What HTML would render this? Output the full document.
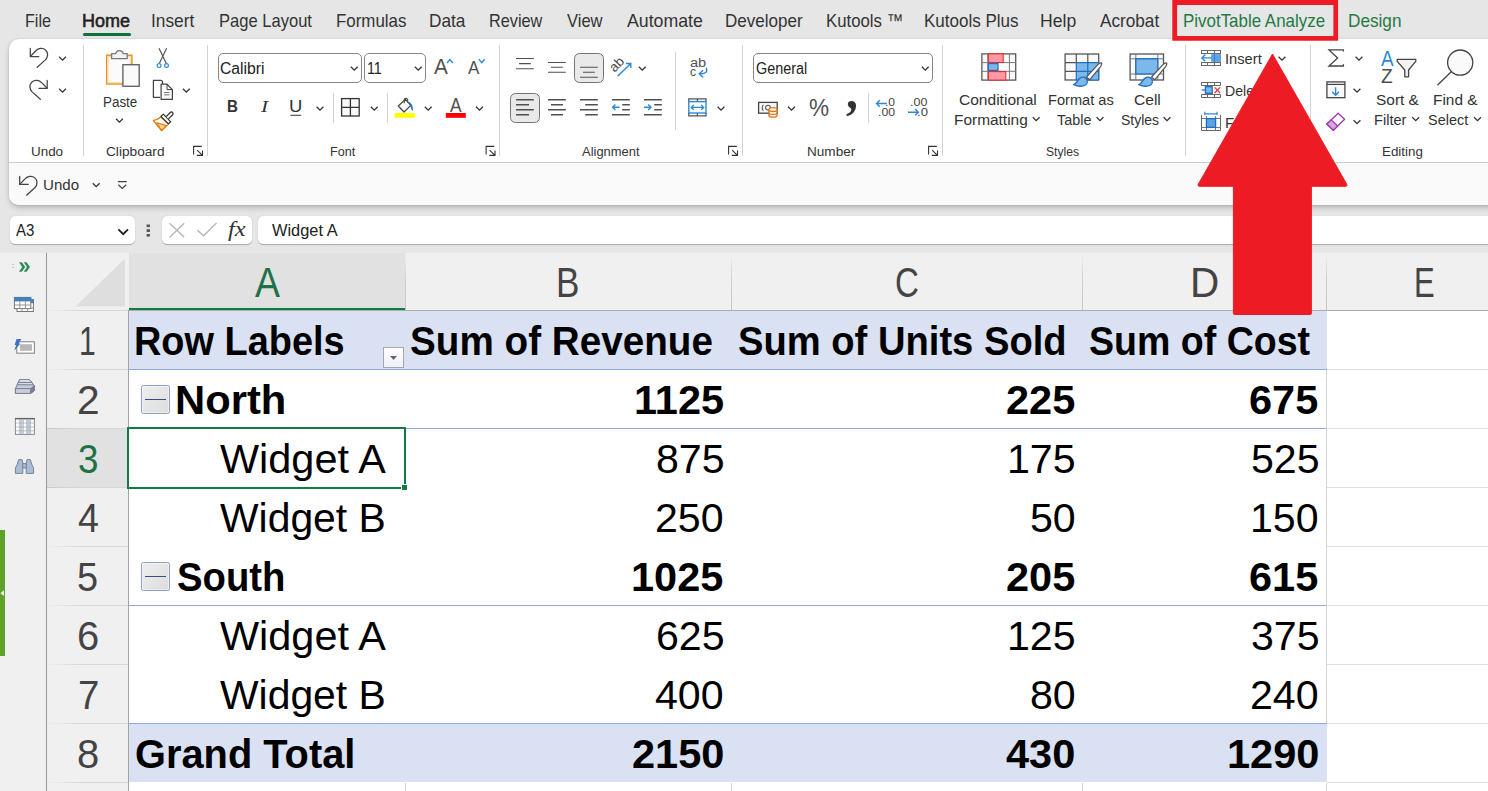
<!DOCTYPE html>
<html lang="en">
<head>
<meta charset="utf-8">
<title>Excel PivotTable Analyze</title>
<style>
html,body{margin:0;padding:0;}
body{width:1488px;height:791px;overflow:hidden;position:relative;background:#e6e6e6;font-family:"Liberation Sans",sans-serif;}
.a{position:absolute;}
.t{position:absolute;white-space:nowrap;transform-origin:0 0;font-family:"Liberation Sans",sans-serif;}
.sf{font-family:"Liberation Serif",serif;}
#ribbon{left:9px;top:39px;width:1500px;height:166px;background:#fff;border-radius:10px 0 0 10px;box-shadow:0 3px 6px -1px rgba(0,0,0,.26),0 0 2px rgba(0,0,0,.12);}
#qat{left:9px;top:162px;width:1500px;height:43px;background:#fafafa;border-top:1px solid #cdcdcd;border-radius:0 0 0 10px;box-sizing:border-box;}
.gs{width:1px;top:45px;height:111px;background:#d2d2d2;}
.ss{width:1px;top:93px;height:30px;background:#d2d2d2;}
.combo{top:53px;height:30px;background:#fff;border:1px solid #868686;border-radius:5px;box-sizing:border-box;}
.sel{background:#e9e9e9;border:1px solid #747474;border-radius:5.5px;box-sizing:border-box;width:30px;height:30px;}
.fb{top:215.75px;height:28.5px;background:#fff;border-radius:5px;box-shadow:0 0.5px 1px rgba(0,0,0,.28);}
#side{left:0;top:253px;width:46px;height:538px;background:#f0f0f0;}
#sideln{left:46px;top:253px;width:1px;height:538px;background:#989898;}
#colhdr{left:47px;top:253px;width:1441px;height:57px;background:#f0f0f0;border-bottom:1px solid #ababab;box-sizing:content-box;}
#rowhdr{left:47px;top:310px;width:81px;height:481px;background:#f0f0f0;border-right:1px solid #a3a3a3;}
#sheet{left:129px;top:311px;width:1359px;height:480px;background:#fff;}
.fill{background:#d9e1f2;left:129px;width:1198px;}
.bl{left:129px;width:1198px;height:1px;background:#8ea9db;}
.hl{left:1327px;width:161px;height:1px;background:#e1e1e1;}
.vl{width:1px;background:#d4d4d4;}
.rs{left:47px;width:81px;height:1px;background:linear-gradient(to right,rgba(215,215,215,0),#d7d7d7 40%);}
.cs{top:254px;width:1px;height:56px;background:linear-gradient(to bottom,rgba(200,200,200,0),#cfcfcf 45%,#c6c6c6);}
</style>
</head>
<body>
<!-- ribbon -->
<div class="a" id="ribbon"></div>
<div class="a" id="qat"></div>
<div class="a" style="left:83px;top:33px;width:48px;height:3px;border-radius:1.5px;background:#0f703b;"></div>
<div class="a gs" style="left:83px"></div>
<div class="a gs" style="left:207px"></div>
<div class="a gs" style="left:499px"></div>
<div class="a gs" style="left:742px"></div>
<div class="a gs" style="left:942px"></div>
<div class="a gs" style="left:1185px"></div>
<div class="a gs" style="left:1310px"></div>
<div class="a ss" style="left:333px"></div>
<div class="a ss" style="left:387px"></div>
<div class="a ss" style="left:868px"></div>
<div class="a ss" style="left:675px;top:52px;height:78px"></div>
<div class="a combo" style="left:218px;width:143.5px"></div>
<div class="a combo" style="left:364px;width:62px"></div>
<div class="a combo" style="left:753px;width:180px"></div>
<div class="a sel" style="left:574px;top:53px"></div>
<div class="a sel" style="left:510px;top:93px"></div>
<!-- formula bar -->
<div class="a fb" style="left:9.5px;width:125.5px"></div>
<div class="a fb" style="left:161.5px;width:90.5px"></div>
<div class="a fb" style="left:258px;width:1240px"></div>
<!-- grid -->
<div class="a" id="side"></div>
<div class="a" id="sideln"></div>
<div class="a" style="left:0;top:530px;width:5px;height:126px;background:#5ea329"></div>
<div class="a" id="colhdr"></div>
<div class="a" id="rowhdr"></div>
<div class="a" id="sheet"></div>
<div class="a" style="left:129px;top:253px;width:276px;height:55px;background:#e1e1e1;border-bottom:2px solid #107c41"></div>
<div class="a" style="left:47px;top:428px;width:81px;height:58px;background:#e1e1e1;border-top:1px solid #c9c9c9;border-bottom:1px solid #c9c9c9"></div>
<div class="a cs" style="left:405px"></div>
<div class="a cs" style="left:731px"></div>
<div class="a cs" style="left:1082px"></div>
<div class="a cs" style="left:1326px"></div>
<div class="a rs" style="top:310px"></div>
<div class="a rs" style="top:369px"></div>
<div class="a rs" style="top:428px"></div>
<div class="a rs" style="top:487px"></div>
<div class="a rs" style="top:546px"></div>
<div class="a rs" style="top:605px"></div>
<div class="a rs" style="top:664px"></div>
<div class="a rs" style="top:723px"></div>
<div class="a rs" style="top:782px"></div>
<div class="a fill" style="top:311px;height:58px"></div>
<div class="a fill" style="top:724px;height:58px"></div>
<div class="a bl" style="top:369px"></div>
<div class="a bl" style="top:428px"></div>
<div class="a bl" style="top:605px"></div>
<div class="a bl" style="top:723px"></div>
<div class="a hl" style="top:369px"></div>
<div class="a hl" style="top:428px"></div>
<div class="a hl" style="top:487px"></div>
<div class="a hl" style="top:546px"></div>
<div class="a hl" style="top:605px"></div>
<div class="a hl" style="top:664px"></div>
<div class="a hl" style="top:723px"></div>
<div class="a hl" style="top:782px"></div>
<div class="a vl" style="left:1326px;top:370px;height:353px"></div>
<div class="a vl" style="left:1326px;top:783px;height:8px"></div>
<div class="a vl" style="left:405px;top:783px;height:8px"></div>
<div class="a vl" style="left:731px;top:783px;height:8px"></div>
<div class="a vl" style="left:1082px;top:783px;height:8px"></div>
<!-- selection -->
<div class="a" style="left:127px;top:427px;width:275px;height:58px;border:2px solid #107c41"></div>
<div class="a" style="left:401px;top:484px;width:5px;height:5px;background:#107c41;border:1px solid #fff;box-sizing:content-box"></div>
<!-- pivot buttons -->
<div class="a" style="left:383px;top:347px;width:21px;height:21px;box-sizing:border-box;border:1px solid #a3a7ae;background:linear-gradient(#fff,#eef1f7)"></div>
<div class="a" style="left:141px;top:385px;width:28.5px;height:28.5px;box-sizing:border-box;border:1px solid #8fa0c6;border-radius:2.5px;background:linear-gradient(135deg,#efefef,#dcdcdc);box-shadow:inset 0 0 0 1px rgba(255,255,255,.45)"></div>
<div class="a" style="left:145px;top:398.7px;width:21px;height:1.4px;background:#3b4a80"></div>
<div class="a" style="left:141px;top:562px;width:28.5px;height:28.5px;box-sizing:border-box;border:1px solid #8fa0c6;border-radius:2.5px;background:linear-gradient(135deg,#efefef,#dcdcdc);box-shadow:inset 0 0 0 1px rgba(255,255,255,.45)"></div>
<div class="a" style="left:145px;top:575.7px;width:21px;height:1.4px;background:#3b4a80"></div>
<div class="t" style="left:25.17px;top:9.00px;font-size:18.1px;line-height:24px;color:#333;transform:scaleX(0.8929);">File</div>
<div class="t" style="left:151.40px;top:9.00px;font-size:18.1px;line-height:24px;color:#333;transform:scaleX(0.9553);">Insert</div>
<div class="t" style="left:218.63px;top:9.00px;font-size:18.1px;line-height:24px;color:#333;transform:scaleX(0.9150);">Page Layout</div>
<div class="t" style="left:335.60px;top:9.00px;font-size:18.1px;line-height:24px;color:#333;transform:scaleX(0.9345);">Formulas</div>
<div class="t" style="left:428.58px;top:9.00px;font-size:18.1px;line-height:24px;color:#333;transform:scaleX(0.9526);">Data</div>
<div class="t" style="left:488.66px;top:9.00px;font-size:18.1px;line-height:24px;color:#333;transform:scaleX(0.8978);">Review</div>
<div class="t" style="left:566.92px;top:9.00px;font-size:18.1px;line-height:24px;color:#333;transform:scaleX(0.9133);">View</div>
<div class="t" style="left:626.96px;top:9.00px;font-size:18.1px;line-height:24px;color:#333;transform:scaleX(0.9784);">Automate</div>
<div class="t" style="left:724.59px;top:9.00px;font-size:18.1px;line-height:24px;color:#333;transform:scaleX(0.9415);">Developer</div>
<div class="t" style="left:825.62px;top:9.00px;font-size:18.1px;line-height:24px;color:#333;transform:scaleX(0.9255);">Kutools ™</div>
<div class="t" style="left:923.60px;top:9.00px;font-size:18.1px;line-height:24px;color:#333;transform:scaleX(0.9390);">Kutools Plus</div>
<div class="t" style="left:1039.55px;top:9.00px;font-size:18.1px;line-height:24px;color:#333;transform:scaleX(0.9720);">Help</div>
<div class="t" style="left:1099.96px;top:9.00px;font-size:18.1px;line-height:24px;color:#333;transform:scaleX(0.9490);">Acrobat</div>
<div class="t" style="left:82.21px;top:9.00px;font-size:18.1px;line-height:24px;color:#222;transform:scaleX(0.9952);-webkit-text-stroke:0.55px #222;">Home</div>
<div class="t" style="left:1182.60px;top:9.00px;font-size:18.1px;line-height:24px;color:#1e7b45;transform:scaleX(0.9356);">PivotTable Analyze</div>
<div class="t" style="left:1347.58px;top:9.00px;font-size:18.1px;line-height:24px;color:#1e7b45;transform:scaleX(0.9495);">Design</div>
<div class="t" style="left:31.46px;top:142.00px;font-size:13.4px;line-height:19px;color:#333;transform:scaleX(1.0016);">Undo</div>
<div class="t" style="left:105.82px;top:142.00px;font-size:13.4px;line-height:19px;color:#333;transform:scaleX(1.0207);">Clipboard</div>
<div class="t" style="left:329.96px;top:142.00px;font-size:13.4px;line-height:19px;color:#333;transform:scaleX(0.9377);">Font</div>
<div class="t" style="left:581.97px;top:142.00px;font-size:13.4px;line-height:19px;color:#333;transform:scaleX(0.9670);">Alignment</div>
<div class="t" style="left:807.38px;top:142.00px;font-size:13.4px;line-height:19px;color:#333;transform:scaleX(1.0145);">Number</div>
<div class="t" style="left:1046.46px;top:142.00px;font-size:13.4px;line-height:19px;color:#333;transform:scaleX(0.9037);">Styles</div>
<div class="t" style="left:1381.90px;top:142.00px;font-size:13.4px;line-height:19px;color:#333;transform:scaleX(0.9993);">Editing</div>
<div class="t" style="left:102.69px;top:91.00px;font-size:15.3px;line-height:21px;color:#333;transform:scaleX(0.8768);">Paste</div>
<div class="t" style="left:959.22px;top:89.00px;font-size:15.3px;line-height:21px;color:#333;transform:scaleX(1.0163);">Conditional</div>
<div class="t" style="left:954.23px;top:109.00px;font-size:15.3px;line-height:21px;color:#333;transform:scaleX(1.0088);">Formatting</div>
<div class="t" style="left:1047.80px;top:89.00px;font-size:15.3px;line-height:21px;color:#333;transform:scaleX(0.9545);">Format as</div>
<div class="t" style="left:1056.68px;top:109.00px;font-size:15.3px;line-height:21px;color:#333;transform:scaleX(0.9417);">Table</div>
<div class="t" style="left:1134.22px;top:89.00px;font-size:15.3px;line-height:21px;color:#333;transform:scaleX(1.0181);">Cell</div>
<div class="t" style="left:1120.87px;top:109.00px;font-size:15.3px;line-height:21px;color:#333;transform:scaleX(0.9152);">Styles</div>
<div class="t" style="left:1376.31px;top:89.00px;font-size:15.3px;line-height:21px;color:#333;transform:scaleX(1.0092);">Sort &amp;</div>
<div class="t" style="left:1373.80px;top:109.00px;font-size:15.3px;line-height:21px;color:#333;transform:scaleX(0.9535);">Filter</div>
<div class="t" style="left:1432.73px;top:89.00px;font-size:15.3px;line-height:21px;color:#333;transform:scaleX(1.0064);">Find &amp;</div>
<div class="t" style="left:1428.35px;top:109.00px;font-size:15.3px;line-height:21px;color:#333;transform:scaleX(0.9465);">Select</div>
<div class="t" style="left:1225.14px;top:48.00px;font-size:15.3px;line-height:21px;color:#333;transform:scaleX(0.9600);">Insert</div>
<div class="t" style="left:1225.34px;top:80.00px;font-size:15.3px;line-height:21px;color:#333;transform:scaleX(0.9219);">Delete</div>
<div class="t" style="left:1225.25px;top:112.00px;font-size:15.3px;line-height:21px;color:#333;transform:scaleX(0.9876);">Format</div>
<div class="t" style="left:219.96px;top:58.00px;font-size:16.0px;line-height:21px;color:#222;transform:scaleX(0.9832);">Calibri</div>
<div class="t" style="left:367.43px;top:58.00px;font-size:16.0px;line-height:21px;color:#222;transform:scaleX(0.8880);">11</div>
<div class="t" style="left:755.78px;top:58.00px;font-size:16.0px;line-height:21px;color:#222;transform:scaleX(0.8993);">General</div>
<div class="t" style="left:227.48px;top:95.40px;font-size:16.7px;line-height:23px;color:#333;transform:scaleX(0.9080);font-weight:bold;">B</div>
<div class="t sf" style="left:261.11px;top:94.40px;font-size:17.5px;line-height:24px;color:#333;transform:scaleX(1.2110);font-style:italic;">I</div>
<div class="t" style="left:289.07px;top:96.20px;font-size:16px;line-height:21px;color:#333;transform:scaleX(1.1564);">U</div>
<div class="t" style="left:433.95px;top:51.00px;font-size:22.9px;line-height:30px;color:#505050;transform:scaleX(0.9063);">A</div>
<div class="t" style="left:467.96px;top:56.00px;font-size:18.2px;line-height:24px;color:#505050;transform:scaleX(0.9330);">A</div>
<div class="t" style="left:450.21px;top:92.00px;font-size:19.6px;line-height:26px;color:#505050;transform:scaleX(0.8856);">A</div>
<div class="t" style="left:690.38px;top:54.00px;font-size:12.3px;line-height:18px;color:#505050;transform:scaleX(1.1869);">ab</div>
<div class="t" style="left:690.48px;top:63.25px;font-size:12.3px;line-height:18px;color:#505050;transform:scaleX(0.9926);">c</div>
<div class="t" style="left:885.41px;top:94.00px;font-size:10.9px;line-height:16px;color:#444;transform:scaleX(1.1061);">.0</div>
<div class="t" style="left:878.40px;top:104.25px;font-size:10.9px;line-height:16px;color:#444;transform:scaleX(1.1264);">.00</div>
<div class="t" style="left:910.13px;top:94.00px;font-size:10.9px;line-height:16px;color:#444;transform:scaleX(1.1445);">.00</div>
<div class="t" style="left:916.57px;top:104.25px;font-size:10.9px;line-height:16px;color:#444;transform:scaleX(1.2037);">.0</div>
<div class="t" style="left:1381.45px;top:45.00px;font-size:21.5px;line-height:28px;color:#2b88d8;transform:scaleX(0.8776);">A</div>
<div class="t" style="left:1381.38px;top:62.00px;font-size:21.1px;line-height:27px;color:#505050;transform:scaleX(0.9089);">Z</div>
<svg class="a" style="left:600px;top:50px;overflow:visible" width="40" height="32"><text transform="translate(14.6,22.8) rotate(-45)" font-family="Liberation Sans, sans-serif" font-size="13.4" fill="#484848">ab</text></svg>
<div class="t" style="left:808.71px;top:92.30px;font-size:24px;line-height:31px;color:#505050;transform:scaleX(0.9400);">%</div>
<div class="t sf" style="left:846.16px;top:61.80px;font-size:49.6px;line-height:59px;color:#333;transform:scaleX(0.9577);font-weight:bold;">,</div>
<div class="t" style="left:42.63px;top:174.50px;font-size:14.9px;line-height:20px;color:#333;transform:scaleX(1.0130);">Undo</div>
<div class="t" style="left:16.21px;top:220.00px;font-size:15.7px;line-height:21px;color:#222;transform:scaleX(0.9601);">A3</div>
<div class="t" style="left:272.17px;top:220.00px;font-size:15.7px;line-height:21px;color:#222;transform:scaleX(1.0443);">Widget A</div>
<div class="t sf" style="left:228.01px;top:214.50px;font-size:21px;line-height:28px;color:#333;transform:scaleX(1.1651);font-style:italic;">fx</div>
<div class="t" style="left:254.51px;top:257.00px;font-size:41.6px;line-height:51px;color:#1e7145;transform:scaleX(0.8999);">A</div>
<div class="t" style="left:556.40px;top:257.00px;font-size:41.6px;line-height:51px;color:#444;transform:scaleX(0.8442);">B</div>
<div class="t" style="left:895.35px;top:257.00px;font-size:41.6px;line-height:51px;color:#444;transform:scaleX(0.7950);">C</div>
<div class="t" style="left:1189.66px;top:257.00px;font-size:41.6px;line-height:51px;color:#444;transform:scaleX(0.9737);">D</div>
<div class="t" style="left:1413.95px;top:257.00px;font-size:41.6px;line-height:51px;color:#444;transform:scaleX(0.7444);">E</div>
<div class="t" style="left:78.75px;top:316.00px;font-size:41.4px;line-height:50px;color:#444;transform:scaleX(0.7260);">1</div>
<div class="t" style="left:76.97px;top:375.00px;font-size:41.4px;line-height:50px;color:#444;transform:scaleX(0.9821);">2</div>
<div class="t" style="left:78.12px;top:434.00px;font-size:41.4px;line-height:50px;color:#1e7145;transform:scaleX(0.8899);">3</div>
<div class="t" style="left:77.65px;top:493.00px;font-size:41.4px;line-height:50px;color:#444;transform:scaleX(0.9088);">4</div>
<div class="t" style="left:77.48px;top:552.00px;font-size:41.4px;line-height:50px;color:#444;transform:scaleX(0.9153);">5</div>
<div class="t" style="left:76.50px;top:611.00px;font-size:41.4px;line-height:50px;color:#444;transform:scaleX(0.9662);">6</div>
<div class="t" style="left:77.58px;top:670.00px;font-size:41.4px;line-height:50px;color:#444;transform:scaleX(0.9290);">7</div>
<div class="t" style="left:77.20px;top:729.00px;font-size:41.4px;line-height:50px;color:#444;transform:scaleX(0.9662);">8</div>
<div class="t" style="left:134.44px;top:317.00px;font-size:40.3px;line-height:49px;color:#000;transform:scaleX(0.9406);font-weight:bold;">Row Labels</div>
<div class="t" style="left:410.34px;top:317.00px;font-size:40.3px;line-height:49px;color:#000;transform:scaleX(0.9594);font-weight:bold;">Sum of Revenue</div>
<div class="t" style="left:737.85px;top:317.00px;font-size:40.3px;line-height:49px;color:#000;transform:scaleX(0.9471);font-weight:bold;">Sum of Units Sold</div>
<div class="t" style="left:1088.87px;top:317.00px;font-size:40.3px;line-height:49px;color:#000;transform:scaleX(0.9318);font-weight:bold;">Sum of Cost</div>
<div class="t" style="left:175.18px;top:376.00px;font-size:40.3px;line-height:49px;color:#000;transform:scaleX(1.0366);font-weight:bold;">North</div>
<div class="t" style="left:176.85px;top:553.00px;font-size:40.3px;line-height:49px;color:#000;transform:scaleX(0.9500);font-weight:bold;">South</div>
<div class="t" style="left:134.91px;top:730.00px;font-size:40.3px;line-height:49px;color:#000;transform:scaleX(0.9875);font-weight:bold;">Grand Total</div>
<div class="t" style="left:220.29px;top:435.00px;font-size:40.3px;line-height:49px;color:#000;transform:scaleX(1.0280);">Widget A</div>
<div class="t" style="left:220.30px;top:494.00px;font-size:40.3px;line-height:49px;color:#000;transform:scaleX(1.0143);">Widget B</div>
<div class="t" style="left:220.29px;top:612.00px;font-size:40.3px;line-height:49px;color:#000;transform:scaleX(1.0280);">Widget A</div>
<div class="t" style="left:220.30px;top:671.00px;font-size:40.3px;line-height:49px;color:#000;transform:scaleX(1.0143);">Widget B</div>
<div class="t" style="left:633.66px;top:376.00px;font-size:40.3px;line-height:49px;color:#000;transform:scaleX(1.0302);font-weight:bold;">1125</div>
<div class="t" style="left:1005.91px;top:376.00px;font-size:40.3px;line-height:49px;color:#000;transform:scaleX(1.0302);font-weight:bold;">225</div>
<div class="t" style="left:1249.41px;top:376.00px;font-size:40.3px;line-height:49px;color:#000;transform:scaleX(1.0302);font-weight:bold;">675</div>
<div class="t" style="left:655.56px;top:435.00px;font-size:40.3px;line-height:49px;color:#000;transform:scaleX(1.0205);">875</div>
<div class="t" style="left:1007.06px;top:435.00px;font-size:40.3px;line-height:49px;color:#000;transform:scaleX(1.0205);">175</div>
<div class="t" style="left:1250.56px;top:435.00px;font-size:40.3px;line-height:49px;color:#000;transform:scaleX(1.0205);">525</div>
<div class="t" style="left:655.46px;top:494.00px;font-size:40.3px;line-height:49px;color:#000;transform:scaleX(1.0205);">250</div>
<div class="t" style="left:1029.89px;top:494.00px;font-size:40.3px;line-height:49px;color:#000;transform:scaleX(1.0205);">50</div>
<div class="t" style="left:1250.46px;top:494.00px;font-size:40.3px;line-height:49px;color:#000;transform:scaleX(1.0205);">150</div>
<div class="t" style="left:631.37px;top:553.00px;font-size:40.3px;line-height:49px;color:#000;transform:scaleX(1.0302);font-weight:bold;">1025</div>
<div class="t" style="left:1005.91px;top:553.00px;font-size:40.3px;line-height:49px;color:#000;transform:scaleX(1.0302);font-weight:bold;">205</div>
<div class="t" style="left:1249.41px;top:553.00px;font-size:40.3px;line-height:49px;color:#000;transform:scaleX(1.0302);font-weight:bold;">615</div>
<div class="t" style="left:655.56px;top:612.00px;font-size:40.3px;line-height:49px;color:#000;transform:scaleX(1.0205);">625</div>
<div class="t" style="left:1007.06px;top:612.00px;font-size:40.3px;line-height:49px;color:#000;transform:scaleX(1.0205);">125</div>
<div class="t" style="left:1250.56px;top:612.00px;font-size:40.3px;line-height:49px;color:#000;transform:scaleX(1.0205);">375</div>
<div class="t" style="left:655.46px;top:671.00px;font-size:40.3px;line-height:49px;color:#000;transform:scaleX(1.0205);">400</div>
<div class="t" style="left:1029.89px;top:671.00px;font-size:40.3px;line-height:49px;color:#000;transform:scaleX(1.0205);">80</div>
<div class="t" style="left:1250.46px;top:671.00px;font-size:40.3px;line-height:49px;color:#000;transform:scaleX(1.0205);">240</div>
<div class="t" style="left:631.89px;top:730.00px;font-size:40.3px;line-height:49px;color:#000;transform:scaleX(1.0302);font-weight:bold;">2150</div>
<div class="t" style="left:1006.43px;top:730.00px;font-size:40.3px;line-height:49px;color:#000;transform:scaleX(1.0302);font-weight:bold;">430</div>
<div class="t" style="left:1226.89px;top:730.00px;font-size:40.3px;line-height:49px;color:#000;transform:scaleX(1.0302);font-weight:bold;">1290</div>
<svg class="a" style="left:0;top:0" width="1488" height="791" viewBox="0 0 1488 791" fill="none">
<defs>
<path id="chv" d="M-3.4,-1.7 L0,1.7 L3.4,-1.7" stroke="#333" stroke-width="1.3" fill="none"/>
<path id="lnch" d="M8.2,0 H0 V8.2 M3.5,3.8 L8.9,9 M8.9,4.1 V9 H3.2" stroke="#333" stroke-width="1.1" fill="none"/>
</defs>
<!-- chevrons -->
<g>
<use href="#chv" x="62.5" y="58.5"/><use href="#chv" x="62.5" y="90.5"/>
<use href="#chv" x="119.4" y="120.5"/><use href="#chv" x="186.3" y="90.5"/>
<use href="#chv" x="354.25" y="68.5"/><use href="#chv" x="418.25" y="68.5"/>
<use href="#chv" x="320" y="108.5"/><use href="#chv" x="374.25" y="108.5"/><use href="#chv" x="428.2" y="108.5"/><use href="#chv" x="479.5" y="108.5"/>
<use href="#chv" x="642.25" y="68.5"/><use href="#chv" x="721" y="108.5"/>
<use href="#chv" x="925.25" y="68.5"/><use href="#chv" x="791.5" y="108.5"/>
<use href="#chv" x="1036.2" y="119"/><use href="#chv" x="1100" y="119"/><use href="#chv" x="1167" y="119"/>
<use href="#chv" x="1282" y="58.5"/>
<use href="#chv" x="1359" y="58.5"/><use href="#chv" x="1357" y="90.5"/><use href="#chv" x="1357" y="122"/>
<use href="#chv" x="1415.7" y="119"/><use href="#chv" x="1477.5" y="119"/>
<use href="#chv" x="96.2" y="185"/>
</g>
<!-- launchers -->
<use href="#lnch" x="193.6" y="146.4"/><use href="#lnch" x="486.1" y="146.4"/><use href="#lnch" x="728.6" y="146.4"/><use href="#lnch" x="928.6" y="146.4"/>
<g transform="translate(0,0)" stroke="#444" stroke-width="1.25" fill="none" stroke-linecap="round" stroke-linejoin="round"><path d="M30.3,48.4 V56.5 H38.8"/><path d="M30.6,56.2 L35.6,51 C38.3,48.2 42.5,47.4 45.5,50 C48.4,52.6 48.3,57 45.4,59.9 L37.2,67.3"/></g>
<g transform="translate(0,0)" stroke="#444" stroke-width="1.25" fill="none" stroke-linecap="round" stroke-linejoin="round"><path d="M47.2,80.4 V88.3 H38.9"/><path d="M46.9,88 L41.9,82.9 C39.2,80.1 35,79.4 32,82 C29.1,84.6 29.2,89 32.1,91.9 L40.4,99.3"/></g>
<g transform="translate(-10.6,127.9)" stroke="#444" stroke-width="1.25" fill="none" stroke-linecap="round" stroke-linejoin="round"><path d="M30.3,48.4 V56.5 H38.8"/><path d="M30.6,56.2 L35.6,51 C38.3,48.2 42.5,47.4 45.5,50 C48.4,52.6 48.3,57 45.4,59.9 L37.2,67.3"/></g>
<g>
<rect x="106.7" y="55.2" width="25.2" height="28.8" fill="#fbfbfb" stroke="#e8912d" stroke-width="1.5"/>
<rect x="108.1" y="56.6" width="22.4" height="26" fill="none" stroke="#fbe0a6" stroke-width="1.2"/>
<path d="M111.6,58.7 V53.6 H115.6 A3.9,3.9 0 0 1 123.2,53.6 H127.2 V58.7 Z" fill="#f3f3f3" stroke="#7a7a7a" stroke-width="1.3" stroke-linejoin="round"/>
<rect x="122.9" y="64.7" width="16.3" height="21.6" fill="#fafafa" stroke="#666" stroke-width="1.4"/>
</g>
<g stroke-width="1.2" fill="none">
<path d="M159,48.3 L166.3,63.6 M166.6,48.3 L159.3,63.6" stroke="#555"/>
<circle cx="159.1" cy="65.6" r="1.9" stroke="#2e8ad8"/><circle cx="166.5" cy="65.6" r="1.9" stroke="#2e8ad8"/>
</g>
<g stroke="#444" stroke-width="1.25" fill="#fafafa" stroke-linejoin="round">
<path d="M160,97.4 H153.4 V80.4 H160.5 Q162.6,80.4 162.6,82.5 V84" fill="none"/>
<path d="M161.1,84.2 H167 L172.4,89.6 V99.4 H161.1 Z"/>
<path d="M167,84.2 V89.6 H172.4" fill="none" stroke-width="1"/>
<path d="M164,92.6 H169.5 M164,94.9 H169.5" stroke="#666" stroke-width="0.9"/>
</g>
<g stroke-linejoin="round">
<path d="M153.3,120.4 Q157.6,119.8 160.8,117 L168.3,124 L161.6,130.5 Z" fill="#fcfcfc" stroke="#e07a10" stroke-width="1.3"/>
<path d="M156.8,122.8 L166.2,125.6 L161.6,130.5 Z" fill="#fbd78a" stroke="#e07a10" stroke-width="1.1"/>
<path d="M161,116.3 L163.4,114.1 L170.7,121.8 L168.5,123.8 Z" fill="#fafafa" stroke="#333" stroke-width="1.2"/>
<path d="M166.2,116.6 L170.2,112.5 Q171.6,111.3 172.7,112.6 Q173.7,113.9 172.5,115 L168.4,118.9" fill="#fafafa" stroke="#333" stroke-width="1.2"/>
</g>
<g stroke="#2b88d8" stroke-width="1.4" fill="none"><path d="M447,63 L449.9,59.6 L452.8,63"/><path d="M478.9,59.3 L481.8,62.6 L484.7,59.3"/></g>
<path d="M290.4,115.3 H301.2" stroke="#444" stroke-width="1.1"/>
<g stroke="#333" stroke-width="1.3" fill="#fafafa"><rect x="341.6" y="98.6" width="17.6" height="17.4"/><path d="M350.4,98.6 V116 M341.6,107.4 H359.2" fill="none"/></g>
<g>
<path d="M398.3,106 L405.3,99.4 L410.8,105.4 L404,112 Z" fill="#fafafa" stroke="#444" stroke-width="1.25" stroke-linejoin="round"/>
<path d="M404.2,103.2 V100 Q404.3,98.2 406,98.2 Q407.7,98.3 407.7,100.4 V102.2" fill="none" stroke="#444" stroke-width="1.1"/>
<path d="M409.2,102.3 Q412.8,104.5 412.4,110.3 Q411.2,106.4 409.9,104.8 Z" fill="#1e6fc0" stroke="#1e6fc0" stroke-width="0.9" stroke-linejoin="round"/>
<rect x="394.8" y="113" width="20" height="4.8" fill="#ffff00"/>
<rect x="445.8" y="113" width="20" height="4.8" fill="#ff0000"/>
</g>
<path d="M516,58.5 H533.8 M519,63.6 H530.8 M516,68.7 H533.8" stroke="#505050" stroke-width="1.1" fill="none"/>
<path d="M548,62.5 H565.8 M551,67.3 H562.8 M548,72.3 H565.8" stroke="#505050" stroke-width="1.1" fill="none"/>
<path d="M580,67.3 H597.8 M583,72.3 H594.8 M580,77.3 H597.8" stroke="#505050" stroke-width="1.1" fill="none"/>
<path d="M516,99.8 H533.8 M516,104.8 H529 M516,109.8 H533.8 M516,114.8 H529" stroke="#505050" stroke-width="1.5" fill="none"/>
<path d="M548,99.8 H565.8 M551,104.8 H563 M548,109.8 H565.8 M551,114.8 H563" stroke="#505050" stroke-width="1.5" fill="none"/>
<path d="M580,99.8 H597.8 M585.2,104.8 H597.8 M580,109.8 H597.8 M585.2,114.8 H597.8" stroke="#505050" stroke-width="1.5" fill="none"/>
<path d="M612,99.8 H629.8 M622.2,104.8 H629.8 M622.2,109.8 H629.8 M612,114.8 H629.8" stroke="#505050" stroke-width="1.5" fill="none"/>
<path d="M644,99.8 H661.8 M654.2,104.8 H661.8 M654.2,109.8 H661.8 M644,114.8 H661.8" stroke="#505050" stroke-width="1.5" fill="none"/>
<g stroke="#2b88d8" stroke-width="1.4" fill="none"><path d="M619.5,107.3 H612.7 M615.4,104.5 L612.6,107.3 L615.4,110.1"/><path d="M644,107.3 H650.9 M648.2,104.5 L651,107.3 L648.2,110.1"/></g>
<g stroke="#2b88d8" stroke-width="1.4" fill="none"><path d="M617.6,76.2 L630.5,63.7 M626,63.5 H630.8 V68"/></g>
<g stroke="#2b88d8" stroke-width="1.4" fill="none" stroke-linecap="round" stroke-linejoin="round"><path d="M706.3,68.3 Q708.6,73.8 699.4,73.8 M702.7,70.6 L699.2,73.8 L702.7,77.1"/></g>
<g fill="none">
<path d="M688.8,101.5 V98.8 H706 V101.5 M697.4,98.8 V101.5 M688.8,113 V115.8 H706 V113 M697.4,113 V115.8" stroke="#555" stroke-width="1.3"/>
<rect x="688.8" y="101.6" width="17.2" height="11.4" fill="#fafafa" stroke="#2b88d8" stroke-width="1.4"/>
<path d="M691.4,107.4 H703.6 M693.8,105 L691.3,107.4 L693.8,109.8 M701.2,105 L703.7,107.4 L701.2,109.8" stroke="#2b88d8" stroke-width="1.3"/>
</g>
<g fill="none">
<rect x="758.6" y="102.4" width="18.6" height="10.8" stroke="#444" stroke-width="1.3" fill="#fafafa"/>
<path d="M763.3,104.8 Q761.2,107.8 763.3,110.8" stroke="#555" stroke-width="1.1"/>
<circle cx="768" cy="107.6" r="2.4" stroke="#555" stroke-width="1.1"/>
<path d="M768.9,109.6 V115.2 A4.1,1.9 0 0 0 777.1,115.2 V109.6" fill="#fff" stroke="#e07010" stroke-width="1.3"/>
<ellipse cx="773" cy="109.6" rx="4.1" ry="1.9" fill="#fff" stroke="#e07010" stroke-width="1.3"/>
<path d="M768.9,112.4 A4.1,1.9 0 0 0 777.1,112.4" stroke="#e07010" stroke-width="1.2"/>
</g>
<g stroke="#2b88d8" stroke-width="1.4" fill="none"><path d="M886.8,103.5 H876.6 M879.8,100.3 L876.5,103.5 L879.8,106.7"/><path d="M908,112.3 H918.3 M915.1,109.1 L918.4,112.3 L915.1,115.5"/></g>
<g>
<rect x="981.9" y="53.9" width="33.8" height="26.2" fill="#fafafa" stroke="#5a5a5a" stroke-width="1.3"/>
<path d="M981.9,62.6 H1015.7 M981.9,71.3 H1015.7 M987.8,53.9 V80.1 M1009.4,53.9 V80.1" stroke="#7a7a7a" stroke-width="1" fill="none"/>
<rect x="988.4" y="53.9" width="14.8" height="8.6" fill="#ff99a3" stroke="#e03030" stroke-width="1.1"/>
<rect x="988.4" y="63.6" width="9.6" height="6.8" fill="#7cb8ea" stroke="#1e6fc0" stroke-width="1.2"/>
<rect x="988.4" y="71.6" width="17.4" height="8.5" fill="#ff99a3" stroke="#e03030" stroke-width="1.1"/>
</g>
<g>
<rect x="1065.1" y="54" width="33.6" height="26" fill="#fafafa" stroke="#555" stroke-width="1.3"/>
<rect x="1076.3" y="62.6" width="22.4" height="17.4" fill="#7cb8ea"/>
<path d="M1076.3,62.6 H1098.7 M1076.3,71.3 H1098.7 M1076.3,62.6 V80 M1087.8,62.6 V80 M1076.3,80 H1098.7 M1098.7,62.6 V80" stroke="#1e6fc0" stroke-width="1.2" fill="none"/>
<path d="M1065.1,62.6 H1076.3 M1065.1,71.3 H1076.3 M1076.3,54 V62.6 M1087.8,54 V62.6" stroke="#555" stroke-width="1.2" fill="none"/>
</g>
<g transform="translate(0,0)">
<path d="M1086.4,77 L1097.8,64.6 Q1100.2,62.2 1101.4,63 Q1102.4,64 1100.4,66.8 L1089.6,79.8 Z" fill="#fafafa" stroke="#555" stroke-width="1.2" stroke-linejoin="round"/>
<path d="M1073.6,84.6 C1077.6,83.8 1077,78.4 1081.4,77.3 C1085,76.5 1088.2,79.4 1087.2,82.6 C1086,86.6 1079,87.4 1073.6,84.6 Z" fill="#7cb8ea" stroke="#1e6fc0" stroke-width="1.3" stroke-linejoin="round"/>
</g>
<g>
<rect x="1130.1" y="54" width="33.4" height="26" fill="#fafafa" stroke="#555" stroke-width="1.3"/>
<path d="M1130.1,58.8 H1163.5 M1130.1,74 H1163.5 M1135.8,54 V80 M1157.8,54 V80" stroke="#7a7a7a" stroke-width="1" fill="none"/>
<rect x="1135.8" y="58.8" width="22" height="15.2" fill="#7cb8ea" stroke="#1e6fc0" stroke-width="1.3"/>
</g>
<g transform="translate(65.1,0)">
<path d="M1086.4,77 L1097.8,64.6 Q1100.2,62.2 1101.4,63 Q1102.4,64 1100.4,66.8 L1089.6,79.8 Z" fill="#fafafa" stroke="#555" stroke-width="1.2" stroke-linejoin="round"/>
<path d="M1073.6,84.6 C1077.6,83.8 1077,78.4 1081.4,77.3 C1085,76.5 1088.2,79.4 1087.2,82.6 C1086,86.6 1079,87.4 1073.6,84.6 Z" fill="#7cb8ea" stroke="#1e6fc0" stroke-width="1.3" stroke-linejoin="round"/>
</g>
<g fill="none">
<rect x="1201.5" y="50.5" width="19" height="15" fill="#fff" stroke="#666" stroke-width="1"/>
<path d="M1201.5,53.5 H1220.5 M1201.5,62.5 H1220.5 M1207.5,50.5 V53.5 M1214.5,50.5 V53.5 M1207.5,62.5 V65.5 M1214.5,62.5 V65.5" stroke="#666" stroke-width="1"/>
<rect x="1200.8" y="54.1" width="10.4" height="7.8" fill="#fff"/>
<rect x="1211.2" y="54.1" width="9.8" height="7.8" fill="#5ea2e0"/>
<path d="M1214.5,54.1 V61.9" stroke="#2b7cd0" stroke-width="0.9"/>
<path d="M1212,57.9 H1202 M1205.3,54.6 L1201.9,57.9 L1205.3,61.2" stroke="#2b88d8" stroke-width="1.4"/>
</g>
<g fill="none">
<path d="M1201.5,85.5 V82.5 H1220.5 V85.5 Z M1201.5,94.5 V97.5 H1220.5 V94.5 Z" fill="#fff" stroke="#666" stroke-width="1"/>
<path d="M1207.5,82.5 V85.5 M1214.5,82.5 V85.5 M1207.5,94.5 V97.5 M1214.5,94.5 V97.5" stroke="#666" stroke-width="1"/>
<rect x="1205.4" y="86.7" width="6.8" height="6.6" fill="#7cb8ea" stroke="#1e6fc0" stroke-width="1.3"/>
<path d="M1201.6,90 H1205" stroke="#1e6fc0" stroke-width="1.2"/>
<path d="M1214.6,87.4 L1220.1,93 M1220.1,87.4 L1214.6,93" stroke="#e03a3a" stroke-width="1.3"/>
</g>
<g fill="none">
<path d="M1204.8,113.8 H1217 M1204.8,111.8 V115.8 M1217,111.8 V115.8" stroke="#2b88d8" stroke-width="1.2"/>
<path d="M1201.5,115.2 V130.5 H1220.5 V115.2" fill="#fff" stroke="#666" stroke-width="1"/>
<path d="M1201.5,118.5 H1220.5 M1201.5,127.5 H1220.5 M1206.5,116 V130.5 M1215.5,116 V130.5" stroke="#777" stroke-width="1"/>
<rect x="1206.4" y="118.6" width="9.2" height="8.8" fill="#5ea2e0" stroke="#1e6fc0" stroke-width="1.3"/>
</g>
<path d="M1343.4,51.6 V49.9 H1329 L1337.6,58 L1329,66 H1343.4 V64.2" fill="none" stroke="#444" stroke-width="1.3" stroke-linejoin="miter"/>
<g fill="none">
<rect x="1326.9" y="81.9" width="18" height="15.8" fill="#fafafa" stroke="#444" stroke-width="1.3"/>
<path d="M1326.9,84.4 H1344.9" stroke="#444" stroke-width="1.2"/>
<path d="M1335.6,87.2 V95 M1332.2,91.8 L1335.6,95.2 L1339,91.8" stroke="#2b88d8" stroke-width="1.4"/>
</g>
<g stroke-linejoin="round">
<path d="M1326.9,124 L1338.2,113.2 L1344.6,119.2 L1333.3,130.2 Z" fill="#fafafa" stroke="#9b3aa8" stroke-width="1.3"/>
<path d="M1326.9,124 L1331.2,119.9 L1337.7,126 L1333.3,130.2 Z" fill="#dba4e2" stroke="#9b3aa8" stroke-width="1.3"/>
</g>
<path d="M1397.2,59.4 H1415.8 V61.4 L1408.6,70 V76.8 H1404.8 V70 L1397.2,61.4 Z" fill="#f3f3f3" stroke="#444" stroke-width="1.3" stroke-linejoin="round"/>
<g stroke="#444" stroke-width="1.3"><circle cx="1460.2" cy="62.6" r="12.6" fill="#fafafa"/><path d="M1451.2,71.8 L1437.4,85.2" fill="none"/></g>
<path d="M117.8,181.6 H126.8 M118.4,184.8 L122.3,188.4 L126.2,184.8" fill="none" stroke="#444" stroke-width="1.25"/>
<path d="M118.4,229.4 L123.2,234.2 L128,229.4" fill="none" stroke="#222" stroke-width="1.9"/>
<g fill="#555"><rect x="146.6" y="224.5" width="3.3" height="2.6"/><rect x="146.6" y="229.2" width="3.3" height="2.8"/><rect x="146.6" y="234" width="3.3" height="2.6"/></g>
<g stroke="#b4b4b4" stroke-width="1.3" fill="none"><path d="M169.6,223.2 L184.2,237.2 M184.2,223.2 L169.6,237.2"/><path d="M197.4,230.2 L203.6,235.8 L216.6,222.9"/></g>
<path d="M125,258.5 V306.5 H75.5 Z" fill="#dedede"/>
<g fill="#2e8b57"><path d="M19,262.2 H21.8 L25.2,267 L21.8,271.8 H19 L22.2,267 Z"/><path d="M23.8,262.2 H26.6 L30,267 L26.6,271.8 H23.8 L27,267 Z"/></g>
<g fill="#c4c4c4"><rect x="12.2" y="264" width="1.6" height="1"/><rect x="12.2" y="267" width="1.6" height="1"/></g>
<g>
<rect x="17" y="299.5" width="16.4" height="12" fill="#fff" stroke="#777" stroke-width="1"/>
<rect x="30.6" y="299.2" width="3.2" height="4" fill="#4a7ebb"/>
<path d="M17,308 H33.4 M22,308 V311.5 M27.6,308 V311.5" stroke="#888" stroke-width="0.8" fill="none"/>
<rect x="14.4" y="297.4" width="16.4" height="11.2" fill="#fff" stroke="#777" stroke-width="1"/>
<rect x="14" y="297" width="17.2" height="4.4" fill="#4a7ebb"/>
<path d="M14.4,305 H30.8 M19.8,301.4 V308.6 M25.4,301.4 V308.6" stroke="#888" stroke-width="0.9" fill="none"/>
</g>
<g>
<rect x="16.8" y="341.8" width="17.6" height="11.4" fill="#fff" stroke="#8a8a8a" stroke-width="1.1"/>
<rect x="20" y="344.2" width="12" height="6.6" fill="#b8b8b8"/>
<path d="M16.6,339 H21.4 L18.6,343.4 H20.4 L14.2,350.8 L16.2,345 H14.6 Z" fill="#3a72c0"/>
</g>
<g stroke="#7a8090" stroke-width="1" stroke-linejoin="round">
<path d="M19.6,379.6 H29.4 L34.4,385.6 V390.6 L30.6,393.4 H15.4 V388.6 Z" fill="#c8cce0"/>
<path d="M19.6,379.6 H29.4 L31.8,382.4 H18.4 Z" fill="#e8eaf4"/>
<path d="M18.4,382.4 H31.8 L33.6,384.8 H17 Z" fill="#d8dcec"/>
<path d="M15.4,388.6 H30.6 V393.4 H15.4 Z" fill="#c8cce0"/>
<path d="M30.6,388.6 L34.4,385.6 V390.6 L30.6,393.4 Z" fill="#7a8090"/>
</g>
<g>
<rect x="15.4" y="418.8" width="19" height="15.6" fill="#fff" stroke="#888" stroke-width="1"/>
<rect x="20" y="419.6" width="2.8" height="14.4" fill="#b8cce8"/><rect x="27" y="419.6" width="3.2" height="14.4" fill="#b8cce8"/>
<path d="M15,418.6 H34.8" stroke="#666" stroke-width="1.4"/>
<path d="M19.4,419 V434.4 M23.4,419 V434.4 M26.4,419 V434.4 M30.6,419 V434.4 M15.4,423 H34.4 M15.4,427 H34.4 M15.4,430.8 H34.4" stroke="#aaa" stroke-width="0.7" fill="none"/>
</g>
<g fill="#a9bcd6" stroke="#7a8496" stroke-width="1" stroke-linejoin="round">
<path d="M17.4,464 L18.6,459.6 H22 L22.8,463 V473.4 H15.4 V468 Z"/>
<path d="M31.6,464 L30.4,459.6 H27 L26.2,463 V473.4 H33.6 V468 Z"/>
<rect x="22.8" y="463.6" width="3.4" height="4.4"/>
</g>
<path d="M4,590.3 L0.3,593.2 L4,596 Z" fill="#e6f2da"/>
<path d="M390,356 H397 L393.5,360 Z" fill="#666"/>
<!-- red highlight box + arrow -->
<path fill-rule="evenodd" fill="#ed1c24" d="M1172.3,0 H1338.1 V40.7 H1172.3 Z M1177.1,5 V35.9 H1333.4 V5 Z"/>
<path d="M1272.5,54 L1346.7,184.2 Q1348,186.3 1345,186.3 H1311.4 V313.5 Q1311.4,314.5 1310.4,314.5 H1234.4 Q1233.4,314.5 1233.4,313.5 V186.3 H1200 Q1197,186.3 1198.3,184.2 Z" fill="#ed1c24" stroke="#ed1c24" stroke-width="1" stroke-linejoin="round"/>
</svg>

</body>
</html>
